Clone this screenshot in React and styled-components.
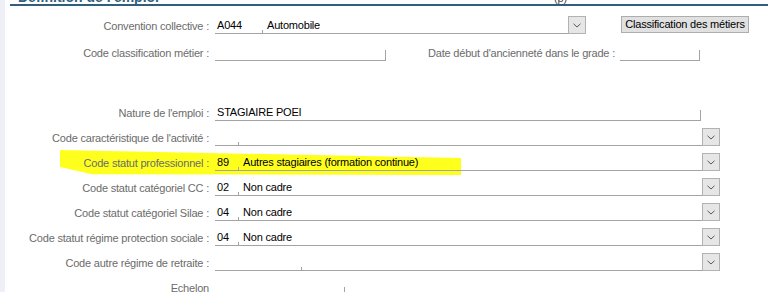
import styled, { createGlobalStyle } from "styled-components";

const GlobalStyle = createGlobalStyle`
  html, body {
    margin: 0;
    padding: 0;
    background: #ffffff;
    overflow: hidden;
  }
  #root {
    width: 768px;
    height: 292px;
    overflow: hidden;
  }
`;

const Page = styled.div`
  position: relative;
  height: 292px;
  overflow: hidden;
  border-left: 5px solid #efeff8;
  font-family: "Liberation Sans", Arial, sans-serif;
  font-size: 11px;
  letter-spacing: -0.2px;
  color: #000;
`;

const Header = styled.div`
  display: flex;
  align-items: flex-end;
  height: 4px;
  margin-left: 5px;
  padding-left: 8px;
  border-bottom: 2px solid #2f5f7c;
`;

const Title = styled.div`
  font-weight: bold;
  font-size: 14px;
  line-height: 14px;
  color: #2f5f7c;
  white-space: nowrap;
  letter-spacing: 0;
`;

const HeaderNote = styled.div`
  margin-left: 395px;
  font-size: 11px;
  line-height: 12px;
  color: #444;
  white-space: nowrap;
`;

const Form = styled.div`
  display: flex;
  flex-direction: column;
  padding-top: 3px;
`;

const Row = styled.div`
  position: relative;
  display: flex;
  align-items: flex-end;
  height: 25px;
  margin-top: ${(p) => p.$gap || 0}px;
`;

const Label = styled.div`
  flex-shrink: 0;
  width: ${(p) => p.$width || 207}px;
  margin-left: ${(p) => p.$offset || 0}px;
  padding-right: 3px;
  box-sizing: border-box;
  text-align: right;
  white-space: nowrap;
  line-height: 13px;
  padding-bottom: 1px;
  color: #6b6b6b;
  position: relative;
  z-index: 1;
`;

const Combo = styled.div`
  flex-shrink: 0;
  display: flex;
  align-items: flex-end;
  width: ${(p) => p.$width}px;
  height: 16px;
  margin-left: ${(p) => p.$offset ?? 3}px;
  border-bottom: 1px solid #a3a3a3;
  position: relative;
  z-index: 1;
`;

const Segment = styled.div`
  position: relative;
  flex: ${(p) => (p.$width ? `0 0 ${p.$width}px` : "1 1 auto")};
  padding-left: ${(p) => p.$pad ?? 3}px;
  box-sizing: border-box;
  line-height: 13px;
  padding-bottom: 1px;
  white-space: nowrap;
  overflow: hidden;
  height: 14px;

  &::after {
    content: "";
    display: ${(p) => (p.$tick ? "block" : "none")};
    position: absolute;
    right: 0;
    bottom: 0;
    width: 1px;
    height: ${(p) => p.$tick || 3}px;
    background: #a3a3a3;
  }
`;

const DropBtn = styled.div`
  flex-shrink: 0;
  width: 18px;
  height: 18px;
  box-sizing: border-box;
  border: 1px solid #b2b2b2;
  background: #e6e6e6;
  display: flex;
  align-items: center;
  justify-content: center;
  position: relative;
  z-index: 1;
`;

const Button = styled.div`
  flex-shrink: 0;
  margin-left: 35px;
  margin-bottom: 1px;
  width: 128px;
  height: 17px;
  box-sizing: border-box;
  border: 1px solid #adadad;
  background: #e1e1e1;
  display: flex;
  align-items: center;
  justify-content: center;
  line-height: 13px;
  white-space: nowrap;
`;

const Highlight = styled.div`
  position: absolute;
  left: 55px;
  top: 4px;
  width: 401px;
  height: 25px;
  background: #ffff1e;
  clip-path: polygon(0 0, 100% 32%, 100% 100%, 8% 97%, 0 68%);
  z-index: 0;
`;

const Chevron = () => (
  <svg width="8" height="5" viewBox="0 0 8 5">
    <path d="M0.5 0.8 L4 4 L7.5 0.8" fill="none" stroke="#5a5a5a" strokeWidth="1" />
  </svg>
);

const Select = ({ code, text, codeWidth = 24, width = 487 }) => (
  <>
    <Combo $width={width}>
      <Segment $width={codeWidth} $tick={3} $pad={2}>
        {code}
      </Segment>
      <Segment $pad={4}>{text}</Segment>
    </Combo>
    <DropBtn>
      <Chevron />
    </DropBtn>
  </>
);

export default function App() {
  return (
    <>
      <GlobalStyle />
      <Page>
        <Header>
          <Title>Définition de l'emploi</Title>
          <HeaderNote>(p)</HeaderNote>
        </Header>
        <Form>
          <Row>
            <Label>Convention collective :</Label>
            <Select code="A044" text="Automobile" codeWidth={48} width={353} />
            <Button>Classification des métiers</Button>
          </Row>
          <Row $gap={2}>
            <Label>Code classification métier :</Label>
            <Combo $width={171}>
              <Segment $tick={10} />
            </Combo>
            <Label $width={210} $offset={22}>
              Date début d'ancienneté dans le grade :
            </Label>
            <Combo $width={80} $offset={2}>
              <Segment $tick={10} />
            </Combo>
          </Row>
          <Row $gap={35}>
            <Label>Nature de l'emploi :</Label>
            <Combo $width={486}>
              <Segment $tick={10} $pad={2}>
                STAGIAIRE POEI
              </Segment>
            </Combo>
          </Row>
          <Row>
            <Label>Code caractéristique de l'activité :</Label>
            <Select code="" text="" />
          </Row>
          <Row>
            <Highlight />
            <Label>Code statut professionnel :</Label>
            <Select code="89" text="Autres stagiaires (formation continue)" />
          </Row>
          <Row>
            <Label>Code statut catégoriel CC :</Label>
            <Select code="02" text="Non cadre" />
          </Row>
          <Row>
            <Label>Code statut catégoriel Silae :</Label>
            <Select code="04" text="Non cadre" />
          </Row>
          <Row>
            <Label>Code statut régime protection sociale :</Label>
            <Select code="04" text="Non cadre" />
          </Row>
          <Row>
            <Label>Code autre régime de retraite :</Label>
            <Select code="" text="" codeWidth={87} />
          </Row>
          <Row>
            <Label>Echelon</Label>
            <Combo $width={300} $offset={3}>
              <Segment $width={130} $tick={8} />
            </Combo>
          </Row>
        </Form>
      </Page>
    </>
  );
}
